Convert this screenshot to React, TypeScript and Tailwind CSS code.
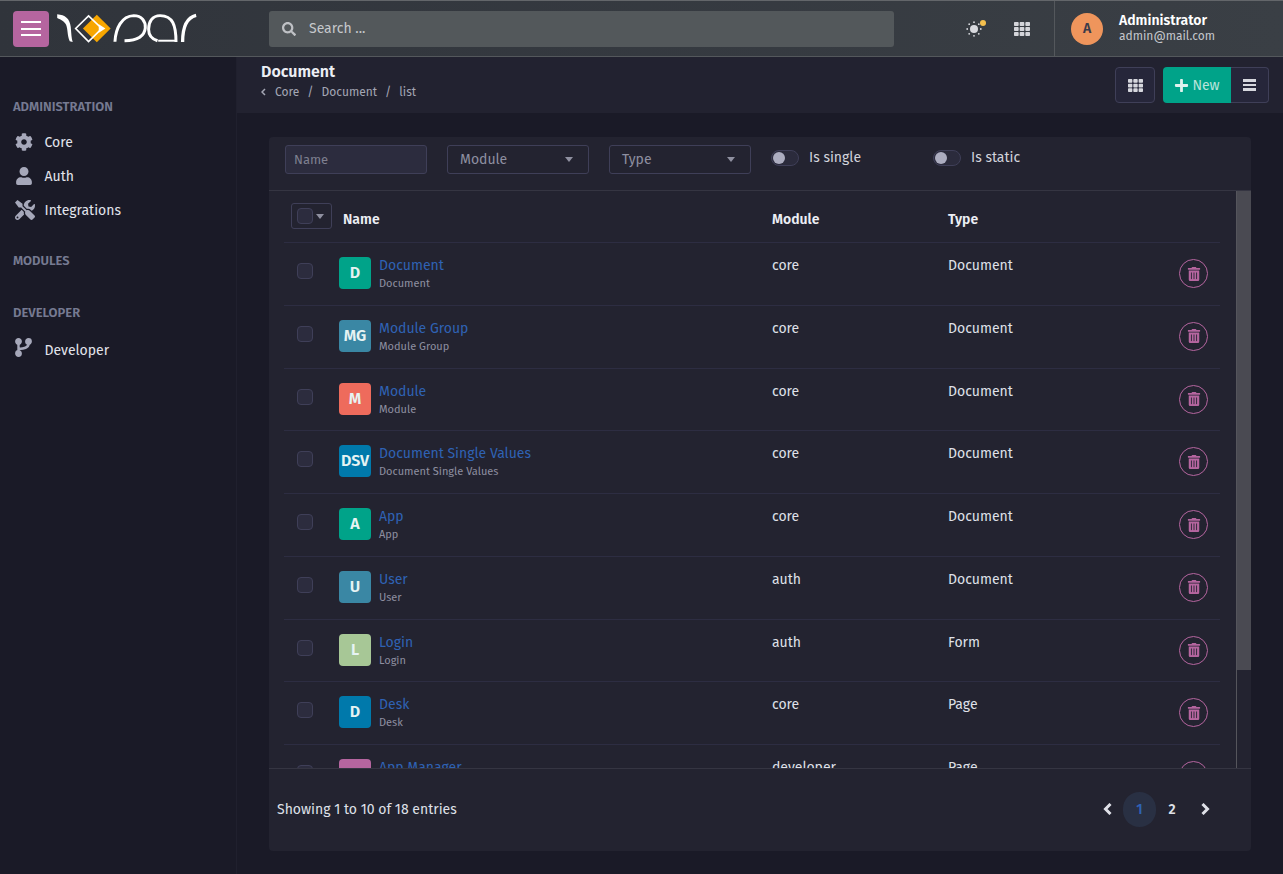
import * as React from "react";
import { FaCog, FaPlus, FaSearch, FaTh, FaTools, FaTrashAlt, FaUser } from "react-icons/fa";

const rows = [
  { short: "D", name: "Document", module: "core", type: "Document", color: "bg-[#00a389]" },
  { short: "MG", name: "Module Group", module: "core", type: "Document", color: "bg-[#3a87a4]" },
  { short: "M", name: "Module", module: "core", type: "Document", color: "bg-[#ee6b5c]" },
  { short: "DSV", name: "Document Single Values", module: "core", type: "Document", color: "bg-[#0079ab]" },
  { short: "A", name: "App", module: "core", type: "Document", color: "bg-[#00a389]" },
  { short: "U", name: "User", module: "auth", type: "Document", color: "bg-[#3a87a4]" },
  { short: "L", name: "Login", module: "auth", type: "Form", color: "bg-[#a7c796]" },
  { short: "D", name: "Desk", module: "core", type: "Page", color: "bg-[#0079ab]" },
  { short: "AM", name: "App Manager", module: "developer", type: "Page", color: "bg-[#b5659f]" },
  { short: "S", name: "Settings", module: "core", type: "Page", color: "bg-[#ee6b5c]" },
];

function Logo() {
  return (
    <svg width="143" height="33" viewBox="165 40 430 100" fill="none" className="ml-[6px]">
      <path d="M170 47 C194 49 208 60 211 85 C213 105 213 120 217 131 L208 129 C200 110 203 95 197 79 C191 67 182 64 170 58 Z" fill="#fff" />
      <path d="M290 48 L332 90 L290 132 L248 90 Z" fill="#f7a600" />
      <path d="M265 52 L305 90 L265 130 L226 90 Z" stroke="#fff" strokeWidth="5" />
      <path d="M296 77 L316 90 L296 103 Z" fill="#fff" />
      <path d="M345 130 C347 90 365 52 402 51 C426 51 438 68 437 88 C435 110 418 126 374 127" stroke="#fff" strokeWidth="9" />
      <path d="M530 131 C530 80 520 51 482 51 C458 51 447 70 447 92 C447 110 458 122 474 127" stroke="#fff" strokeWidth="9" />
      <path d="M476 127 H528" stroke="#fff" strokeWidth="6" />
      <path d="M550 131 C550 85 565 56 591 50" stroke="#fff" strokeWidth="10" />
    </svg>
  );
}

function SunDots() {
  const dots = [0, 45, 90, 135, 180, 225, 270, 315];
  return (
    <svg width="16" height="16" viewBox="0 0 16 16" fill="#d8d9de">
      <circle cx="8" cy="8" r="4" />
      {dots.map((d) => (
        <circle key={d} cx={8 + 6.8 * Math.cos((d * Math.PI) / 180)} cy={8 + 6.8 * Math.sin((d * Math.PI) / 180)} r="0.9" />
      ))}
    </svg>
  );
}

function BranchIcon() {
  return (
    <svg width="17" height="19" viewBox="0 0 17 19" fill="none" stroke="#a6a8ba" strokeWidth="2.4" className="-mt-[6px]">
      <circle cx="3.5" cy="3.5" r="2.2" fill="#a6a8ba" />
      <circle cx="13.5" cy="3.5" r="2.2" fill="#a6a8ba" />
      <circle cx="3.5" cy="15.5" r="2.2" fill="#a6a8ba" />
      <path d="M3.5 4 V15 M13.5 4 V6 C13.5 10 9 10.5 3.5 11" />
    </svg>
  );
}

function Chevron({ dir }: { dir: "left" | "right" }) {
  return (
    <svg width="9" height="12" viewBox="0 0 9 12" fill="none" stroke="#dfe0e8" strokeWidth="3">
      <path d={dir === "left" ? "M7.5 1 L2.5 6 L7.5 11" : "M1.5 1 L6.5 6 L1.5 11"} />
    </svg>
  );
}

function Caret() {
  return <span className="block h-0 w-0 border-x-[4.5px] border-t-[5px] border-x-transparent border-t-[#8f90a0]" />;
}

function SideItem({ icon, label }: { icon: React.ReactNode; label: string }) {
  return (
    <div className="flex h-[34px] items-center pl-[15px]">
      <span className="flex w-[29.5px] shrink-0 text-[18px] text-[#a6a8ba]">{icon}</span>
      <span className="text-[14px] text-[#e2e4ec]">{label}</span>
    </div>
  );
}

function SelectBox({ label }: { label: string }) {
  return (
    <div className="flex h-[29px] w-[142px] items-center justify-between rounded-[3px] border border-[#3f3f58] pl-3 pr-[15px] text-[14px] text-[#8e8fa0]">
      {label}
      <Caret />
    </div>
  );
}

function Toggle({ label }: { label: string }) {
  return (
    <div className="flex w-[142px] items-center">
      <span className="flex h-4 w-7 items-center rounded-full border border-[#3f3f58] bg-[#2b2b3c] pl-[1px]">
        <span className="h-3 w-3 rounded-full bg-[#acadc0]" />
      </span>
      <span className="ml-[10px] mt-[1px] text-[14px] leading-4 text-[#d2d3dc]">{label}</span>
    </div>
  );
}

export default function App() {
  return (
    <div className="flex h-[874px] flex-col overflow-hidden bg-[#1a1a27] font-['Fira_Sans','Roboto',sans-serif] text-[14px] text-[#e2e4ec]">
      {/* Top bar */}
      <header className="flex h-[57px] shrink-0 items-center border-y border-t-[#63666a] border-b-[#54585c] bg-gradient-to-r from-[#30343b] to-[#3a3f45]">
        <div className="flex w-[269px] shrink-0 items-center pl-[13px]">
          <button className="flex h-9 w-9 flex-col items-center justify-center gap-[4.5px] rounded-[4px] bg-[#b5659f]">
            <span className="h-[2px] w-5 bg-white" />
            <span className="h-[2px] w-5 bg-white" />
            <span className="h-[2px] w-5 bg-white" />
          </button>
          <Logo />
        </div>
        <div className="flex h-9 w-[625px] items-center rounded-[3px] bg-[#53585b] pl-[13px] text-[14px] text-[#c6c8cc]">
          <FaSearch className="mr-[13px] text-[14px] text-[#bfc1c5]" />
          Search ...
        </div>
        <div className="relative ml-[72px] flex w-4 justify-center">
          <SunDots />
          <span className="absolute -right-[4px] -top-[1px] h-[6px] w-[6px] rounded-full bg-[#f5c04e]" />
        </div>
        <FaTh className="ml-[32px] text-[16px] text-[#d4d5da]" />
        <div className="ml-[24px] flex h-full items-center border-l border-[#54585c] pl-4">
          <span className="flex h-8 w-8 items-center justify-center rounded-full bg-[#ef955c] text-[14px] font-semibold text-[#3b3b4a]">A</span>
          <div className="ml-4 flex flex-col pb-[2px]">
            <span className="text-[14px] font-semibold leading-[17px] text-white">Administrator</span>
            <span className="text-[12px] leading-[15px] text-[#c5c7cc]">admin@mail.com</span>
          </div>
        </div>
      </header>

      <div className="flex min-h-0 flex-1">
        {/* Sidebar */}
        <aside className="w-[237px] shrink-0 border-r border-[#20202e] bg-[#1a1a27] pt-[42px]">
          <div className="pl-[13px] text-[13px] font-semibold leading-4 text-[#767a92]">ADMINISTRATION</div>
          <div className="mt-[10px]">
            <SideItem icon={<FaCog />} label="Core" />
            <SideItem icon={<FaUser />} label="Auth" />
            <SideItem icon={<FaTools className="text-[20px]" />} label="Integrations" />
          </div>
          <div className="mt-[26px] pl-[13px] text-[13px] font-semibold leading-4 text-[#767a92]">MODULES</div>
          <div className="mt-[36px] pl-[13px] text-[13px] font-semibold leading-4 text-[#767a92]">DEVELOPER</div>
          <div className="mt-[12px]">
            <SideItem icon={<BranchIcon />} label="Developer" />
          </div>
        </aside>

        <main className="flex min-w-0 flex-1 flex-col">
          {/* Page title */}
          <div className="flex h-[56px] shrink-0 items-start justify-between bg-[#222230] pl-6 pr-[14px] pt-[6px]">
            <div>
              <div className="text-[16px] font-semibold leading-[18px] text-[#eceef4]">Document</div>
              <div className="mt-[2px] flex items-center text-[12px] leading-[18px] text-[#a4a6b4]">
                <svg width="5" height="8" viewBox="0 0 5 8" fill="none" stroke="#a4a6b4" strokeWidth="1.5" className="mr-[9px]">
                  <path d="M4 1 L1 4 L4 7" />
                </svg>
                <span>Core</span>
                <span className="mx-[8px]">/</span>
                <span>Document</span>
                <span className="mx-[8px]">/</span>
                <span>list</span>
              </div>
            </div>
            <div className="mt-[4px] flex">
              <button className="flex h-9 w-10 items-center justify-center rounded-[4px] border border-[#3f3f58] bg-[#26263a] text-[15px] text-[#d6d7de]">
                <FaTh />
              </button>
              <button className="ml-2 flex h-9 w-[68px] items-center justify-center rounded-l-[4px] bg-[#00a389] text-[14px] text-[#b9e3db]">
                <FaPlus className="mr-[3px] text-[15px] text-[#dff2ee]" />
                New
              </button>
              <button className="flex h-9 w-[38px] flex-col items-center justify-center gap-[2px] rounded-r-[4px] border border-l-0 border-[#3f3f58] bg-[#26263a]">
                <span className="h-[2.5px] w-[13px] bg-[#d6d7de]" />
                <span className="h-[2.5px] w-[13px] bg-[#d6d7de]" />
                <span className="h-[2.5px] w-[13px] bg-[#d6d7de]" />
              </button>
            </div>
          </div>

          {/* Card */}
          <div className="mb-[23px] ml-8 mr-8 mt-6 flex min-h-0 flex-1 flex-col rounded-[4px] bg-[#232330]">
            <div className="flex h-[54px] shrink-0 items-start gap-5 border-b border-[#353542] pl-4 pt-2">
              <input
                placeholder="Name"
                className="h-[29px] w-[142px] rounded-[3px] border border-[#3f3f58] bg-[#2c2c3e] px-2 text-[13px] text-[#d2d3dc] outline-none placeholder:text-[#7f8090]"
              />
              <SelectBox label="Module" />
              <SelectBox label="Type" />
              <div className="mt-1 flex gap-5">
                <Toggle label="Is single" />
                <Toggle label="Is static" />
              </div>
            </div>

            {/* Table with its scrollbar */}
            <div className="flex min-h-0 flex-1">
              <div className="min-h-0 flex-1 overflow-y-auto pb-[15px] pl-[15px] pr-[16px] [scrollbar-width:none]">
                <div className="flex h-[52.1px] items-center border-b border-[#2d2d42] text-[14px] font-semibold text-[#eceef4]">
                  <div className="w-[59px] shrink-0 pb-[1px] pl-[7px]">
                    <span className="flex h-[26px] w-[41px] items-center rounded-[3px] border border-[#3f3f58] pl-[5px]">
                      <span className="h-4 w-4 rounded-[4px] border border-[#3f3f58] bg-[#2c2c3e]" />
                      <span className="ml-[3px]"><Caret /></span>
                    </span>
                  </div>
                  <div className="w-[429px] shrink-0 pt-[5px]">Name</div>
                  <div className="w-[176px] shrink-0 pt-[5px]">Module</div>
                  <div className="pt-[5px]">Type</div>
                </div>
                {rows.map((r) => (
                  <div key={r.name} className="flex h-[62.75px] items-start border-b border-[#2d2d42] pt-[14px] text-[14px]">
                    <div className="w-[55px] shrink-0 pl-[13px] pt-[6px]">
                      <span className="block h-4 w-4 rounded-[4px] border border-[#3f3f58] bg-[#2c2c3e]" />
                    </div>
                    <div className={`flex h-8 w-8 shrink-0 items-center justify-center rounded-[4px] text-[16px] font-semibold text-[#e6f3f3] ${r.color}`}>
                      {r.short}
                    </div>
                    <div className="w-[401px] shrink-0 pl-2">
                      <div className="text-[14px] leading-[18px] text-[#2f62b4]">{r.name}</div>
                      <div className="text-[11px] leading-[18px] text-[#8e8fa0]">{r.name}</div>
                    </div>
                    <div className="w-[176px] shrink-0 leading-[18px] text-[#dfe0e8]">{r.module}</div>
                    <div className="w-[231px] shrink-0 leading-[18px] text-[#dfe0e8]">{r.type}</div>
                    <button className="mt-[2px] flex h-[29px] w-[29px] shrink-0 items-center justify-center rounded-full border border-[#b5659f] text-[14px] text-[#b5659f]">
                      <FaTrashAlt />
                    </button>
                  </div>
                ))}
              </div>
              <div className="w-[15px] shrink-0 border-l border-[#55555c]">
                <div className="h-[479px] bg-[#4a4a52]" />
              </div>
            </div>

            {/* Footer */}
            <div className="flex h-[83px] shrink-0 items-center justify-between border-t border-[#353542] pl-2 pr-[41px]">
              <span className="-mt-[1px] text-[14px] text-[#dfe0e8]">Showing 1 to 10 of 18 entries</span>
              <div className="-mt-[2px] flex items-center text-[14px] font-semibold text-[#dfe0e8]">
                <Chevron dir="left" />
                <span className="ml-[11px] flex h-[35px] w-[33px] items-center justify-center rounded-full bg-[#293043] text-[#2f62b4]">1</span>
                <span className="flex h-[35px] w-[32px] items-center justify-center">2</span>
                <span className="ml-[13px]"><Chevron dir="right" /></span>
              </div>
            </div>
          </div>
        </main>
      </div>
    </div>
  );
}
